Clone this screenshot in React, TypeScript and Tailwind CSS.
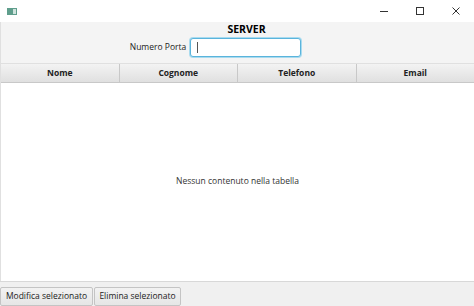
import React from 'react'

const font = { fontFamily: '"Open Sans", "Noto Sans", sans-serif' }

// Column header cell of the empty table
function HeaderCell({ label, last }: { label: string; last?: boolean }) {
  return (
    <div
      className={`flex-1 flex items-center justify-center text-[8.5px] font-bold text-[#222] ${last ? '' : 'border-r border-[#c8c8c8]'}`}
    >
      {label}
    </div>
  )
}

function WindowControls() {
  return (
    <div className="flex items-center h-full">
      <div className="w-[36px] flex justify-center">
        <svg width="8" height="8" viewBox="0 0 8 8">
          <path d="M0 4.5h8" stroke="#333" strokeWidth="1" />
        </svg>
      </div>
      <div className="w-[36px] flex justify-center">
        <svg width="8" height="8" viewBox="0 0 8 8">
          <rect x="0.5" y="0.5" width="7" height="7" fill="none" stroke="#333" strokeWidth="1" />
        </svg>
      </div>
      <div className="w-[36px] flex justify-center">
        <svg width="8" height="8" viewBox="0 0 8 8">
          <path d="M0.5 0.5l7 7M7.5 0.5l-7 7" stroke="#333" strokeWidth="1" />
        </svg>
      </div>
    </div>
  )
}

export default function App() {
  return (
    <div className="w-[474px] h-[306px] flex flex-col bg-white overflow-hidden" style={font}>
      {/* title bar */}
      <div className="h-[22px] flex items-center justify-between bg-white">
        <div className="pl-[7px] flex items-center">
          <svg width="10" height="7" viewBox="0 0 10 7">
            <rect x="0" y="0" width="10" height="7" fill="#5f9e8c" />
            <rect x="6" y="1" width="3" height="5" fill="#cfe3dd" />
          </svg>
        </div>
        <WindowControls />
      </div>

      {/* top form */}
      <div className="h-[41px] bg-[#f4f4f4] border-l border-[#e0e0e0] flex flex-col items-center">
        <div className="text-[10.5px] font-bold text-black leading-none pt-[2px] ml-[18px]">SERVER</div>
        <div className="flex items-center gap-[4px] mt-[3px] mr-[44px]">
          <span className="text-[8.5px] text-[#222]">Numero Porta</span>
          <div className="w-[111px] h-[19px] bg-white border border-[#5ab4dc] rounded-[3px] shadow-[0_0_0_1px_#a9dbef] flex items-center pl-[6px]">
            <div className="w-px h-[11px] bg-[#555]" />
          </div>
        </div>
      </div>

      {/* table */}
      <div className="flex-1 flex flex-col border-t border-[#c8c8c8] border-l border-[#e0e0e0]">
        <div className="h-[19px] flex bg-gradient-to-b from-[#f3f3f3] to-[#e0e0e0] border-b border-[#c8c8c8]">
          <HeaderCell label="Nome" />
          <HeaderCell label="Cognome" />
          <HeaderCell label="Telefono" />
          <HeaderCell label="Email" last />
        </div>
        <div className="flex-1 flex items-center justify-center bg-white text-[8.5px] text-[#333] pb-[2px]">
          Nessun contenuto nella tabella
        </div>
      </div>

      {/* bottom buttons */}
      <div className="h-[25px] bg-[#f0f0f0] border-t border-[#d8d8d8] flex items-end">
        <button className="h-[19px] w-[93px] text-[8.5px] text-[#222] bg-gradient-to-b from-[#f2f2f2] to-[#e6e6e6] border border-[#c4c4c4] rounded-[2px] leading-none">
          Modifica selezionato
        </button>
        <button className="h-[19px] w-[87px] ml-px text-[8.5px] text-[#222] bg-gradient-to-b from-[#f2f2f2] to-[#e6e6e6] border border-[#c4c4c4] rounded-[2px] leading-none">
          Elimina selezionato
        </button>
      </div>
    </div>
  )
}
